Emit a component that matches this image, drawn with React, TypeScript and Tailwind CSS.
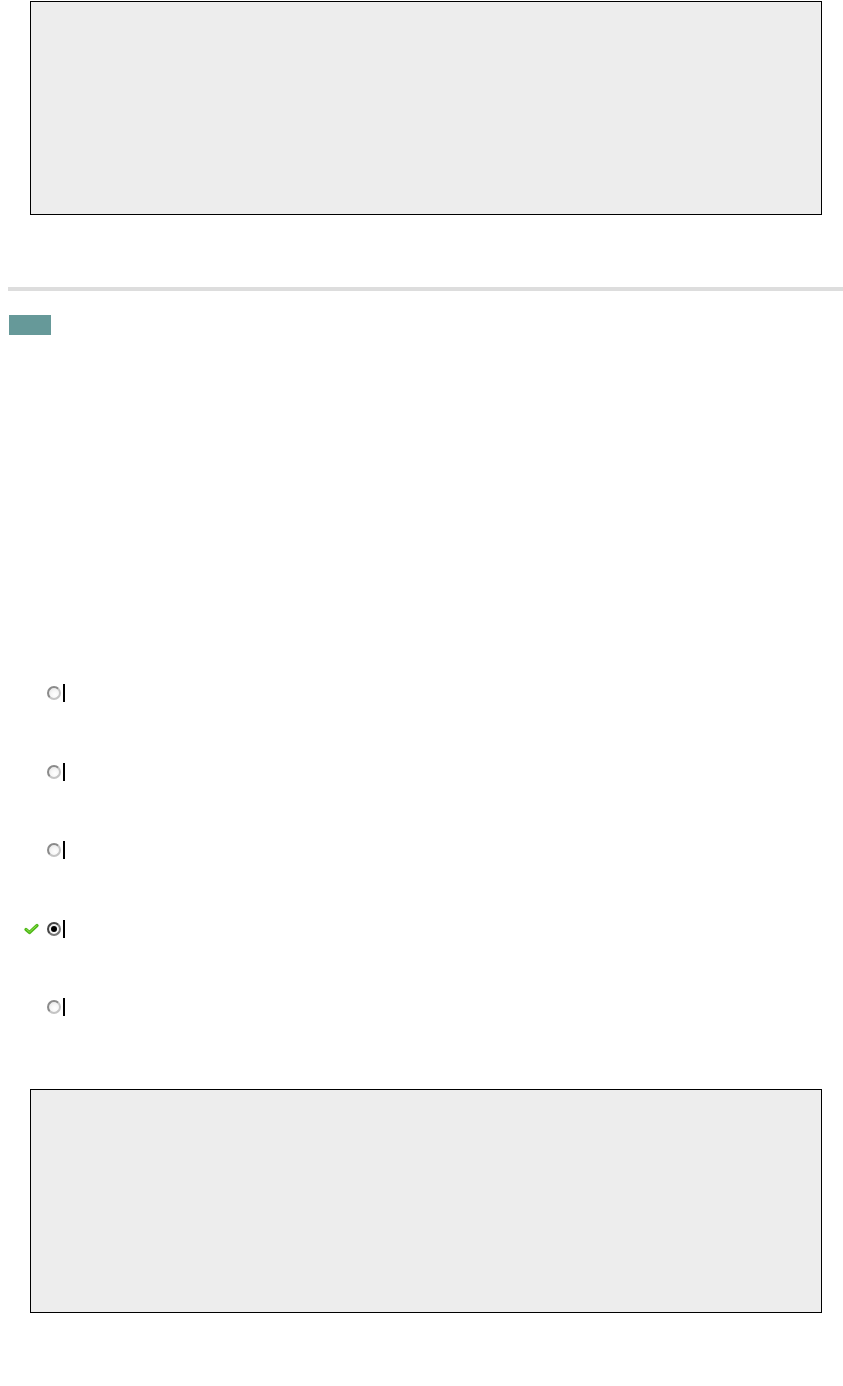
import React from 'react';

const options = [false, false, false, true, false];

const Radio: React.FC<{ checked: boolean }> = ({ checked }) => (
  <div className="flex items-center">
    <div
      className={`w-[14px] h-[14px] rounded-full border-2 flex items-center justify-center bg-[radial-gradient(circle_at_60%_65%,#ffffff_0%,#f6f6f6_45%,#dcdcdc_100%)] ${
        checked
          ? 'border-t-[#444] border-l-[#444] border-r-[#777] border-b-[#777]'
          : 'border-t-[#8a8a8a] border-l-[#8a8a8a] border-r-[#c4c4c4] border-b-[#c4c4c4]'
      }`}
    >
      {checked && <div className="w-[6px] h-[6px] rounded-full bg-black" />}
    </div>
    <div className="ml-[2px] w-[2px] h-[18px] bg-black" />
  </div>
);

const Check: React.FC = () => (
  <svg width="15" height="12" viewBox="0 0 15 12" className="block">
    <path d="M2 6.5 L5.5 9.5 L13 2.5" fill="none" stroke="#4fb81a" strokeWidth="3.2" strokeLinecap="round" strokeLinejoin="round" />
    <path d="M2.6 6.6 L5.5 9 L12.4 2.8" fill="none" stroke="#8fe04a" strokeWidth="1" strokeLinecap="round" />
  </svg>
);

const App: React.FC = () => {
  return (
    <div className="w-[843px] min-h-[1386px] bg-white pt-[1px] font-['Liberation_Sans',sans-serif]">
      <div className="ml-[30px] w-[792px] h-[214px] border border-black bg-[#ededed]" />

      <div className="mt-[72px] ml-[8px] w-[835px] h-[4px] bg-[#dddddd]" />

      <div className="mt-[24px] ml-[9px] w-[42px] h-[20px] bg-[#669999]" />

      <div className="mt-[349px] flex flex-col">
        {options.map((checked, i) => (
          <div key={i} className="h-[78.5px] flex items-start">
            <div className="w-[47px] flex justify-end pr-[8px] pt-[3px]">{checked && <Check />}</div>
            <Radio checked={checked} />
          </div>
        ))}
      </div>

      <div className="mt-[12px] ml-[30px] w-[792px] h-[224px] border border-black bg-[#ededed]" />
    </div>
  );
};

export default App;
